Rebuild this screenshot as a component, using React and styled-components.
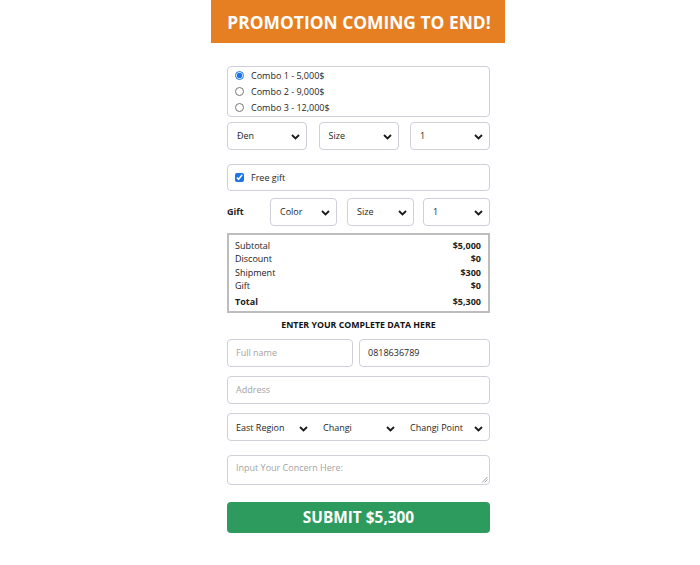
import React from "react";
import styled, { createGlobalStyle } from "styled-components";

const Global = createGlobalStyle`
  html, body { margin: 0; padding: 0; background: #fff; }
  body { font-family: "Open Sans", "Noto Sans", sans-serif; color: #222; }
  * { box-sizing: border-box; }
`;

const Page = styled.div`
  display: flex;
  justify-content: center;
  padding-left: 16px;
  width: 700px;
`;

const Wrapper = styled.div`
  width: 294px;
  display: flex;
  flex-direction: column;
`;

const Banner = styled.div`
  height: 43px;
  background: #e67e22;
  color: #fff;
  font-weight: 700;
  font-size: 17.4px;
  display: flex;
  align-items: center;
  justify-content: center;
  padding-left: 2px;
`;

const Form = styled.form`
  padding: 23px 15px 0 16px;
  display: flex;
  flex-direction: column;
`;

const Box = styled.div`
  border: 1px solid #cdd0d8;
  border-radius: 4px;
  margin-top: ${(p) => p.$mt || 0}px;
`;

const RadioBox = styled(Box)`
  padding: 0 8px 0 7px;
  display: flex;
  flex-direction: column;
`;

const Option = styled.label`
  display: flex;
  align-items: center;
  gap: 7px;
  height: 16.3px;
  font-size: 9px;
  color: #1e1e1e;
`;

const Radio = styled.input`
  margin: 0;
  width: 9px;
  height: 9px;
  accent-color: #1a73e8;
`;

const Row = styled.div`
  display: grid;
  grid-template-columns: ${(p) => p.$cols};
  column-gap: ${(p) => p.$gap || 0}px;
  align-items: center;
  margin-top: ${(p) => p.$mt || 0}px;
`;

const SelectWrap = styled.div`
  position: relative;
  height: 28px;
  border: ${(p) => (p.$bare ? "none" : "1px solid #cdd0d8")};
  border-radius: 4px;
  display: flex;
  align-items: center;
  padding-left: ${(p) => (p.$bare ? 8 : 9)}px;
  font-size: 9px;
  color: #1e1e1e;
`;

const Chevron = styled.svg`
  position: absolute;
  right: ${(p) => p.$right || 6}px;
  top: 50%;
  margin-top: -2px;
`;

const Select = ({ label, bare, right }) => (
  <SelectWrap $bare={bare}>
    {label}
    <Chevron $right={right} width="9" height="6" viewBox="0 0 9 6">
      <polyline points="1,1 4.5,4.5 8,1" fill="none" stroke="#1a1a1a" strokeWidth="1.8" />
    </Chevron>
  </SelectWrap>
);

const CheckBox = styled(Box)`
  height: 27px;
  display: flex;
  align-items: center;
  gap: 7px;
  padding-left: 7px;
  font-size: 9px;
  color: #1e1e1e;
`;

const Check = styled.input`
  margin: 0;
  width: 9px;
  height: 9px;
  accent-color: #1a73e8;
`;

const GiftLabel = styled.div`
  font-size: 9px;
  font-weight: 700;
`;

const Summary = styled.div`
  margin-top: 7px;
  height: 80px;
  border: 2px solid #bdbdbd;
  padding: 4px 7px 0 6px;
  display: flex;
  flex-direction: column;
`;

const SumRow = styled.div`
  display: flex;
  justify-content: space-between;
  font-size: 9px;
  line-height: 13.5px;
  margin-top: ${(p) => (p.$total ? 2.5 : 0)}px;
  font-weight: ${(p) => (p.$total ? 700 : 400)};
`;

const Value = styled.span`
  font-weight: 700;
`;

const Heading = styled.div`
  margin-top: 6px;
  text-align: center;
  font-size: 8.8px;
  font-weight: 700;
  color: #111;
`;

const Input = styled.div`
  height: 28px;
  border: 1px solid #cdd0d8;
  border-radius: 4px;
  display: flex;
  align-items: center;
  padding-left: 8px;
  font-size: 9px;
  color: ${(p) => (p.$ph ? "#a3a3a3" : "#1e1e1e")};
  margin-top: ${(p) => p.$mt || 0}px;
`;

const RegionBox = styled(Box)`
  display: grid;
  grid-template-columns: 87px 87px 1fr;
  height: 28px;
  align-items: center;
`;

const Textarea = styled.div`
  position: relative;
  margin-top: 14px;
  height: 30px;
  border: 1px solid #cdd0d8;
  border-radius: 4px;
  padding: 5px 8px;
  font-size: 9px;
  color: #a3a3a3;
`;

const Grip = styled.svg`
  position: absolute;
  right: 1px;
  bottom: 1px;
`;

const Submit = styled.button`
  margin-top: 17px;
  height: 31px;
  border: none;
  border-radius: 4px;
  background: #2e9b5e;
  color: #fff;
  font-family: "Open Sans", sans-serif;
  font-weight: 700;
  font-size: 15.4px;
  cursor: pointer;
`;

export default function App() {
  return (
    <>
      <Global />
      <Page>
        <Wrapper>
          <Banner>PROMOTION COMING TO END!</Banner>
          <Form onSubmit={(e) => e.preventDefault()}>
            <RadioBox>
              <Option><Radio type="radio" name="combo" defaultChecked />Combo 1 - 5,000$</Option>
              <Option><Radio type="radio" name="combo" />Combo 2 - 9,000$</Option>
              <Option><Radio type="radio" name="combo" />Combo 3 - 12,000$</Option>
            </RadioBox>
            <Row $cols="80px 80px 80px" $gap={11.5} $mt={5}>
              <Select label="Đen" />
              <Select label="Size" />
              <Select label="1" />
            </Row>
            <CheckBox $mt={14}>
              <Check type="checkbox" defaultChecked />Free gift
            </CheckBox>
            <Row $cols="43px 67px 10px 67px 9px 67px" $mt={7}>
              <GiftLabel>Gift</GiftLabel>
              <Select label="Color" />
              <span />
              <Select label="Size" />
              <span />
              <Select label="1" />
            </Row>
            <Summary>
              <SumRow><span>Subtotal</span><Value>$5,000</Value></SumRow>
              <SumRow><span>Discount</span><Value>$0</Value></SumRow>
              <SumRow><span>Shipment</span><Value>$300</Value></SumRow>
              <SumRow><span>Gift</span><Value>$0</Value></SumRow>
              <SumRow $total><span>Total</span><Value>$5,300</Value></SumRow>
            </Summary>
            <Heading>ENTER YOUR COMPLETE DATA HERE</Heading>
            <Row $cols="126px 1fr" $gap={6} $mt={8}>
              <Input $ph>Full name</Input>
              <Input>0818636789</Input>
            </Row>
            <Input $ph $mt={9}>Address</Input>
            <RegionBox $mt={9}>
              <Select bare label="East Region" right={7} />
              <Select bare label="Changi" right={7} />
              <Select bare label="Changi Point" right={6} />
            </RegionBox>
            <Textarea>
              Input Your Concern Here:
              <Grip width="7" height="7" viewBox="0 0 7 7">
                <line x1="1" y1="6.5" x2="6.5" y2="1" stroke="#888" strokeWidth="0.8" />
                <line x1="3.5" y1="6.5" x2="6.5" y2="3.5" stroke="#888" strokeWidth="0.8" />
              </Grip>
            </Textarea>
            <Submit type="submit">SUBMIT $5,300</Submit>
          </Form>
        </Wrapper>
      </Page>
    </>
  );
}
